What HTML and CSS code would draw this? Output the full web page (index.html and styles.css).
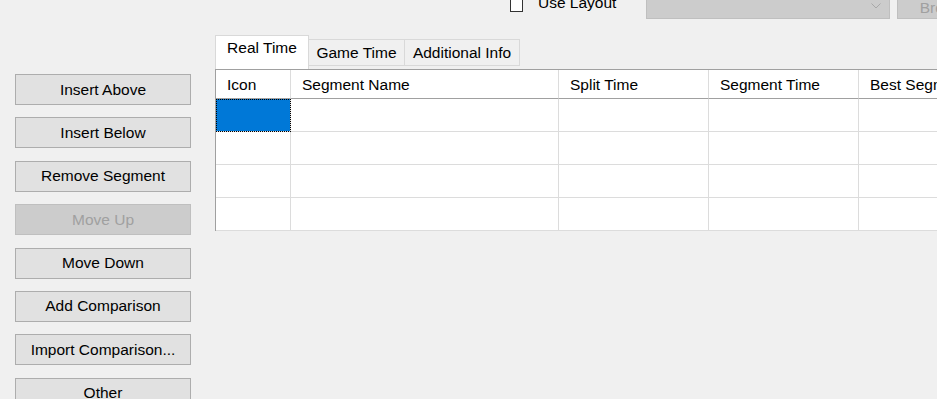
FILE: index.html
```html
<!DOCTYPE HTML>
<html>
<head>
<link rel="stylesheet" href="styles.css">
</head>
<body>
<!-- layout picker, clipped by the top of the window -->
<div class="topbar">
  <label class="check"><span class="box"></span>Use Layout</label>
  <div class="combo">
    <svg class="chevron" width="10" height="6" viewBox="0 0 10 6"><path d="M0.5 0.5 L5 5 L9.5 0.5" fill="none" stroke="#a8a8a8" stroke-width="1"/></svg>
  </div>
  <button class="btn browse" disabled>Browse...</button>
</div>

<div class="main">
  <div class="side">
    <button class="btn">Insert Above</button>
    <button class="btn">Insert Below</button>
    <button class="btn">Remove Segment</button>
    <button class="btn" disabled>Move Up</button>
    <button class="btn">Move Down</button>
    <button class="btn">Add Comparison</button>
    <button class="btn">Import Comparison...</button>
    <button class="btn">Other</button>
  </div>

  <div class="editor">
    <div class="tabs">
      <span class="tab current">Real Time</span>
      <span class="tab">Game Time</span>
      <span class="tab">Additional Info</span>
    </div>
    <table class="grid">
      <tr>
        <th class="c-icon">Icon</th>
        <th class="c-name">Segment Name</th>
        <th class="c-time">Split Time</th>
        <th class="c-time">Segment Time</th>
        <th class="c-time">Best Segment</th>
      </tr>
      <tr><td class="selected"></td><td></td><td></td><td></td><td></td></tr>
      <tr><td></td><td></td><td></td><td></td><td></td></tr>
      <tr><td></td><td></td><td></td><td></td><td></td></tr>
      <tr><td></td><td></td><td></td><td></td><td></td></tr>
    </table>
  </div>
</div>
</body>
</html>
```

FILE: styles.css
```css
html, body
{
  margin: 0;
  padding: 0;
  background: #f0f0f0;
  overflow: hidden;
  width: 937px;
  height: 399px;
}
body
{
  font-family: "Liberation Sans", Arial, sans-serif;
  font-size: 15.5px;
  color: #000;
}

/* top row */
.topbar
{
  display: flex;
  align-items: flex-start;
  height: 23px;
  margin-top: -4px;
  white-space: nowrap;
}
.topbar > *
{
  flex-shrink: 0;
}
.check
{
  display: flex;
  align-items: flex-start;
  margin-left: 510px;
  margin-top: -2px;
  line-height: 18px;
  width: 136px;
}
.check .box
{
  flex-shrink: 0;
  width: 13px;
  height: 13px;
  box-sizing: border-box;
  border: 1px solid #333;
  background: #fff;
  margin-top: 5px;
  margin-right: 15px;
}
.combo
{
  width: 244px;
  height: 23px;
  box-sizing: border-box;
  border: 1px solid #bfbfbf;
  background: #cccccc;
  position: relative;
}
.chevron
{
  position: absolute;
  right: 8px;
  top: 6px;
}

/* buttons */
.btn
{
  display: block;
  font: inherit;
  color: #000;
  background: #e1e1e1;
  border: 1px solid #adadad;
  border-radius: 0;
  padding: 0;
  margin: 0;
  height: 31px;
  width: 176px;
  box-sizing: border-box;
  text-align: center;
  white-space: nowrap;
}
.btn:disabled
{
  background: #cccccc;
  border-color: #bfbfbf;
  color: #a0a0a0;
}
.browse
{
  width: 110px;
  height: 23px;
  margin-left: 7px;
}

.main
{
  display: flex;
  align-items: flex-start;
}
.side
{
  display: flex;
  flex-direction: column;
  gap: 12.4px;
  margin-left: 15px;
  padding-top: 55px;
  flex-shrink: 0;
}
.editor
{
  margin-left: 24px;
  margin-top: 16px;
  flex-shrink: 0;
}

/* tabs */
.tabs
{
  display: flex;
  height: 34px;
}
.tab
{
  box-sizing: border-box;
  height: 27px;
  margin-top: 4px;
  padding: 4px 0 0;
  border: 1px solid #d9d9d9;
  border-left: none;
  background: #f0f0f0;
  text-align: center;
  line-height: 18px;
  white-space: nowrap;
}
.tab:nth-child(2) { width: 96px; }
.tab:nth-child(3) { width: 115px; }
.tab.current
{
  width: 94px;
  height: 34px;
  margin-top: 0;
  padding-top: 3px;
  background: #fff;
  border: 1px solid #d9d9d9;
  border-bottom: none;
}

/* grid */
.grid
{
  border-collapse: separate;
  border-spacing: 0;
  table-layout: fixed;
  width: 794px;
  border-top: 1px solid #a0a0a0;
  border-left: 1px solid #a0a0a0;
  background: #fff;
}
.grid th, .grid td
{
  box-sizing: border-box;
  border-right: 1px solid #dcdcdc;
  border-bottom: 1px solid #dcdcdc;
  padding: 0 0 0 11px;
  text-align: left;
  font-weight: normal;
  white-space: nowrap;
  overflow: hidden;
}
.grid th
{
  height: 29px;
  border-bottom: 1px solid #a0a0a0;
  padding-top: 1px;
}
.grid td
{
  height: 33px;
}
.c-icon { width: 75px; }
.c-name { width: 268px; }
.c-time { width: 150px; }
.grid td.selected
{
  background: #0078d7;
  outline: 1px dotted #000;
  outline-offset: -1px;
}
```
